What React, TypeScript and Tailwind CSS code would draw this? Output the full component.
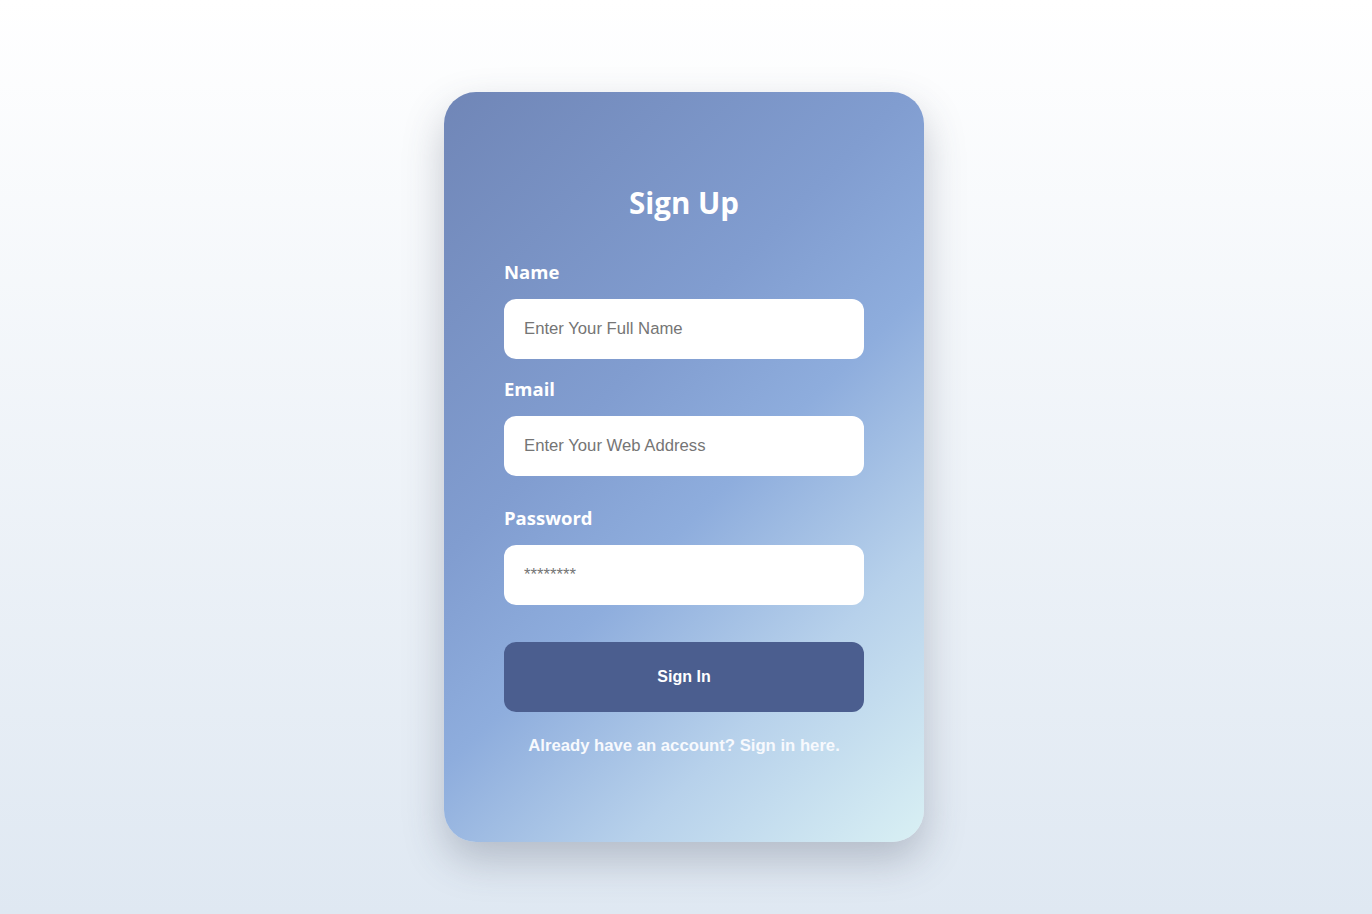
import React from "react";

function Field({
  label,
  placeholder,
  type = "text",
  className = "",
}: {
  label: string;
  placeholder: string;
  type?: string;
  className?: string;
}) {
  return (
    <div className={`flex flex-col ${className}`}>
      <label className="mb-[15px] text-[18.5px] font-bold leading-[24px] text-white [font-family:'Open_Sans',sans-serif]">
        {label}
      </label>
      <input
        type={type}
        placeholder={placeholder}
        className="h-[60px] w-full rounded-[12px] bg-white px-5 text-[16.7px] text-gray-700 outline-none placeholder:text-[#757575] [font-family:'Liberation_Sans',Arial,sans-serif]"
      />
    </div>
  );
}

export default function App() {
  return (
    <div className="flex min-h-[914px] justify-center bg-gradient-to-b from-white to-[#dfe8f2] pr-[4px] pt-[92px]">
      <div className="flex h-[750px] w-[480px] flex-col rounded-[32px] bg-[linear-gradient(135deg,#7086b7_0%,#819dd0_38%,#8eaddd_55%,#b7d1eb_76%,#d9f0f4_100%)] px-[60px] pt-[93px] shadow-[0_18px_40px_rgba(60,70,90,0.28)]">
        <h1 className="text-center text-[29.5px] font-bold leading-[36px] text-white [font-family:'Open_Sans',sans-serif]">
          Sign Up
        </h1>
        <form className="flex flex-col" onSubmit={(e) => e.preventDefault()}>
          <Field label="Name" placeholder="Enter Your Full Name" className="mt-[39px]" />
          <Field label="Email" placeholder="Enter Your Web Address" type="email" className="mt-[18px]" />
          <Field label="Password" placeholder="********" type="password" className="mt-[30px]" />
          <button
            type="submit"
            className="mt-[37px] h-[70px] w-full rounded-[12px] bg-[#4b5e8f] text-[16px] font-bold text-white [font-family:'Liberation_Sans',Arial,sans-serif]"
          >
            Sign In
          </button>
        </form>
        <p className="mt-[24px] text-center text-[16.7px] font-bold leading-[20px] text-[#f7f9fd] [font-family:'Liberation_Sans',Arial,sans-serif]">
          Already have an account? Sign in here.
        </p>
      </div>
    </div>
  );
}
